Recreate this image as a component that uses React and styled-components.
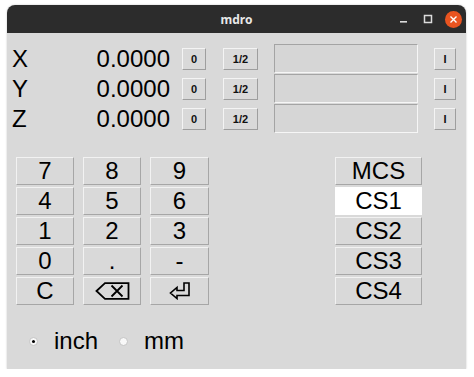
import React from "react";
import styled, { createGlobalStyle } from "styled-components";

const GlobalStyle = createGlobalStyle`
  html, body { margin: 0; padding: 0; background: #ffffff; }
  body { font-family: "Liberation Sans", Arial, sans-serif; }
`;

const Window = styled.div`
  margin: 5px 0 0 7px;
  width: 459px;
  height: 364px;
  border-radius: 8px 8px 0 0;
  overflow: hidden;
  display: flex;
  flex-direction: column;
  box-shadow: 0 0 2px rgba(0,0,0,0.25);
`;

const TitleBar = styled.div`
  height: 28px;
  flex: none;
  background: #2c2c2c;
  display: grid;
  grid-template-columns: 1fr auto 1fr;
  align-items: center;
`;

const Title = styled.div`
  grid-column: 2;
  color: #e8e8e8;
  font-family: "Noto Sans", "DejaVu Sans", sans-serif;
  font-weight: 700;
  font-size: 12px;
`;

const Controls = styled.div`
  grid-column: 3;
  justify-self: end;
  display: flex;
  align-items: center;
  gap: 10px;
  padding-right: 4px;
`;

const Ctrl = styled.div`
  width: 14px;
  height: 14px;
  display: flex;
  align-items: center;
  justify-content: center;
`;

const CloseCtrl = styled.div`
  width: 17px;
  height: 17px;
  border-radius: 50%;
  background: #e95420;
  display: flex;
  align-items: center;
  justify-content: center;
`;

const Content = styled.div`
  flex: 1;
  background: #d9d9d9;
  display: flex;
  flex-direction: column;
`;

const AxisGrid = styled.div`
  display: grid;
  grid-template-columns: 30px 128px 36px 52px 160px 38px;
  grid-auto-rows: 29px;
  row-gap: 1px;
  padding: 11px 0 0 5px;
  align-items: center;
`;

const AxisLabel = styled.div`
  font-size: 24px;
  color: #000;
  line-height: 29px;
`;

const AxisValue = styled.div`
  font-size: 24px;
  color: #000;
  text-align: right;
  line-height: 29px;
`;

const SmallButton = styled.div`
  justify-self: end;
  width: ${(p) => p.$w}px;
  height: 22px;
  box-sizing: border-box;
  background: #d9d9d9;
  border: 1px solid;
  border-color: #f4f4f4 #9e9e9e #9e9e9e #f4f4f4;
  display: flex;
  align-items: center;
  justify-content: center;
  font-size: 11px;
  font-weight: 700;
  color: #111;
`;

const Entry = styled.div`
  justify-self: end;
  width: 144px;
  height: 29px;
  box-sizing: border-box;
  background: #d6d6d6;
  border: 1px solid;
  border-color: #a4a4a4 #f6f6f6 #f6f6f6 #a4a4a4;
`;

const KeyArea = styled.div`
  display: flex;
  padding: 24px 0 0 9px;
`;

const KeyPad = styled.div`
  display: grid;
  grid-template-columns: 58px 58px 59px;
  grid-auto-rows: 28px;
  column-gap: 9px;
  row-gap: 2px;
`;

const CSColumn = styled.div`
  display: grid;
  grid-template-columns: 87px;
  grid-auto-rows: 28px;
  row-gap: 2px;
  margin-left: 126px;
`;

const Key = styled.div`
  box-sizing: border-box;
  background: ${(p) => (p.$active ? "#ffffff" : "#d9d9d9")};
  border: 1px solid;
  border-color: ${(p) =>
    p.$active ? "#ffffff" : "#f2f2f2 #a6a6a6 #a6a6a6 #f2f2f2"};
  display: flex;
  align-items: center;
  justify-content: center;
  font-size: 24px;
  color: #000;
  line-height: 1;
`;

const RadioRow = styled.div`
  display: flex;
  align-items: center;
  padding: 22px 0 0 22px;
`;

const RadioItem = styled.div`
  display: flex;
  align-items: center;
  gap: 16px;
  margin-right: 21px;
  font-size: 24px;
  color: #000;
`;

const RadioDot = styled.div`
  width: 9px;
  height: 9px;
  border-radius: 50%;
  background: #f8f8f8;
  border: 1px solid #c4c4c4;
  box-sizing: border-box;
  display: flex;
  align-items: center;
  justify-content: center;
  &::after {
    content: "";
    width: 3px;
    height: 3px;
    border-radius: 50%;
    background: ${(p) => (p.$on ? "#000" : "transparent")};
  }
`;

const BackspaceIcon = () => (
  <svg width="35" height="18" viewBox="0 0 35 18">
    <path d="M1.5 9 L10 1.2 H33.5 V16.8 H10 Z" fill="none" stroke="#000" strokeWidth="1.8" />
    <path d="M16.5 3.5 L27.5 14.5 M27.5 3.5 L16.5 14.5" stroke="#000" strokeWidth="1.8" />
  </svg>
);

const EnterIcon = () => (
  <svg width="22" height="18" viewBox="0 0 22 18">
    <path
      d="M15 1 H20 V13.5 H8 V16.5 L1.5 11 L8 5.5 V8.5 H15 Z"
      fill="none"
      stroke="#000"
      strokeWidth="1.6"
      strokeLinejoin="miter"
    />
  </svg>
);

const axes = ["X", "Y", "Z"];
const keys = ["7", "8", "9", "4", "5", "6", "1", "2", "3", "0", ".", "-", "C"];
const cs = ["MCS", "CS1", "CS2", "CS3", "CS4"];

export default function App() {
  return (
    <>
      <GlobalStyle />
      <Window>
        <TitleBar>
          <Title>mdro</Title>
          <Controls>
            <Ctrl>
              <svg width="10" height="10" viewBox="0 0 10 10">
                <rect x="1" y="7" width="7" height="1.6" fill="#dcdcdc" />
              </svg>
            </Ctrl>
            <Ctrl>
              <svg width="10" height="10" viewBox="0 0 10 10">
                <rect x="1.5" y="1.5" width="7" height="7" fill="none" stroke="#dcdcdc" strokeWidth="1.5" />
              </svg>
            </Ctrl>
            <CloseCtrl>
              <svg width="9" height="9" viewBox="0 0 9 9">
                <path d="M1.5 1.5 L7.5 7.5 M7.5 1.5 L1.5 7.5" stroke="#fff" strokeWidth="1.4" />
              </svg>
            </CloseCtrl>
          </Controls>
        </TitleBar>
        <Content>
          <AxisGrid>
            {axes.map((a) => (
              <React.Fragment key={a}>
                <AxisLabel>{a}</AxisLabel>
                <AxisValue>0.0000</AxisValue>
                <SmallButton $w={24}>0</SmallButton>
                <SmallButton $w={35}>1/2</SmallButton>
                <Entry />
                <SmallButton $w={22}>I</SmallButton>
              </React.Fragment>
            ))}
          </AxisGrid>
          <KeyArea>
            <KeyPad>
              {keys.map((k) => (
                <Key key={k}>{k}</Key>
              ))}
              <Key>
                <BackspaceIcon />
              </Key>
              <Key>
                <EnterIcon />
              </Key>
            </KeyPad>
            <CSColumn>
              {cs.map((c) => (
                <Key key={c} $active={c === "CS1"}>
                  {c}
                </Key>
              ))}
            </CSColumn>
          </KeyArea>
          <RadioRow>
            <RadioItem>
              <RadioDot $on />
              inch
            </RadioItem>
            <RadioItem>
              <RadioDot />
              mm
            </RadioItem>
          </RadioRow>
        </Content>
      </Window>
    </>
  );
}
